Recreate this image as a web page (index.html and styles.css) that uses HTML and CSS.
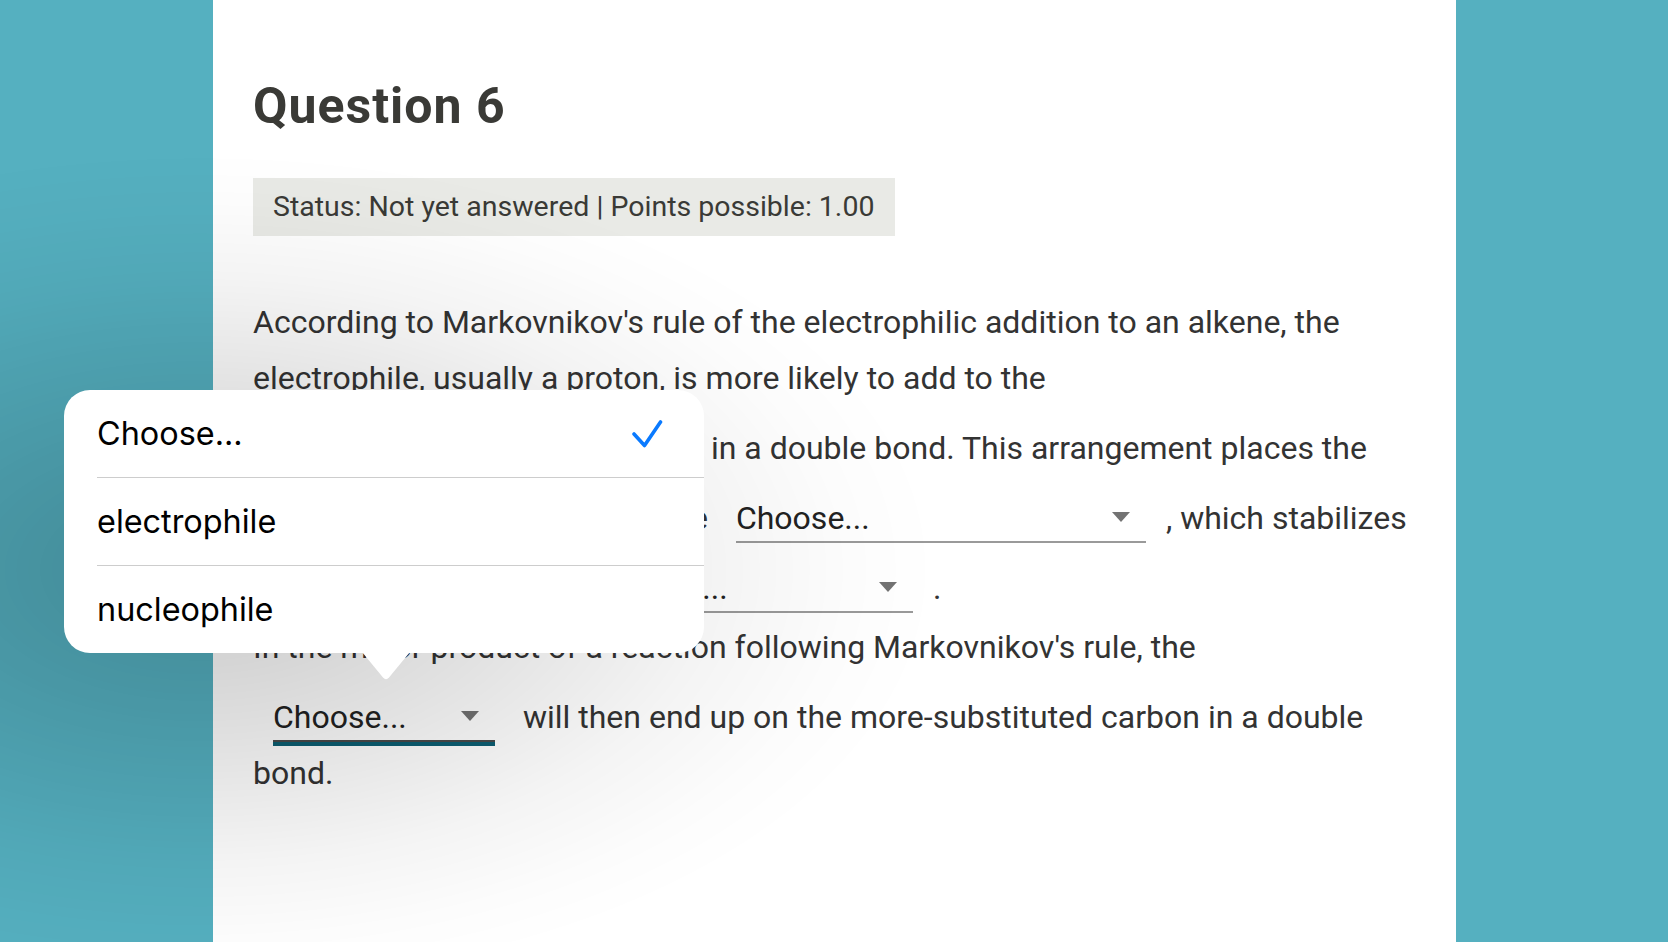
FILE: index.html
```html
<!DOCTYPE html>
<html lang="en">
<head>
  <meta charset="UTF-8" />
  <meta name="viewport" content="width=device-width, initial-scale=1.0"/>
  <title>Question 6</title>
  <link rel="stylesheet" href="styles.css">
</head>
<body>

<div class="page">
  <h1 class="q-title">Question 6</h1>
  <div class="q-status">Status: Not yet answered | Points possible: 1.00</div>

  <p class="q-text">According to Markovnikov's rule of the electrophilic addition to an alkene, the electrophile, usually a proton, is more likely to add to the <span class="pick pick-lg">Choose...</span> in a double bond. This arrangement places the emerging positive charge on the <span class="pick pick-lg">Choose...</span>, which stabilizes a carbocation through <span class="pick pick-md">Choose...</span>.<br>In the major product of a reaction following Markovnikov's rule, the <span class="pick pick-sm is-open">Choose...</span> will then end up on the more-substituted carbon in a double bond.</p>
</div>

<!-- dimmed backdrop behind the open picker -->
<div class="dim"></div>

<!-- native picker popover for the open select -->
<div class="picker">
  <div class="picker-row">
    <span>Choose...</span>
    <svg class="picker-check" width="32" height="30" viewBox="0 0 32 30">
      <path d="M3 15 L13.5 26.5 L29.5 3" fill="none" stroke="#0a7aff" stroke-width="3.6" stroke-linecap="round" stroke-linejoin="round"/>
    </svg>
  </div>
  <div class="picker-row">electrophile</div>
  <div class="picker-row">nucleophile</div>
  <svg class="picker-tail" width="48" height="29" viewBox="0 0 48 29">
    <path d="M0 0 H48 L27 25.5 Q24 29 21 25.5 Z" fill="#fff"/>
  </svg>
</div>

</body>
</html>
```

FILE: styles.css
```css
body {
  margin: 0;
  height: 942px;
  overflow: hidden;
  background: #55b0c0;
  font-family: Roboto, "Liberation Sans", sans-serif;
}

.page {
  width: 1243px;
  min-height: 942px;
  margin-left: 213px;
  padding: 40px;
  box-sizing: border-box;
  background: #fff;
}

.q-title {
  margin: 36px 0 0;
  font-size: 50px;
  line-height: 60px;
  font-weight: 700;
  letter-spacing: 1px;
  color: #3a3a36;
}

.q-status {
  width: fit-content;
  margin-top: 42px;
  padding: 12px 21px 12px 20px;
  background: #e9eae6;
  color: #3a3a36;
  font-size: 28.5px;
  line-height: 34px;
}

.q-text {
  margin: 58px 0 0;
  font-size: 32px;
  line-height: 56px;
  color: #333;
}

/* select look-alikes */
.pick {
  display: inline-block;
  position: relative;
  box-sizing: border-box;
  margin: 0 20px 3px;
  padding: 24px 0 5px;
  line-height: 36px;
  color: #222;
  border-bottom: 2px solid #9a9a9a;
}

.pick::after {
  content: "";
  position: absolute;
  right: 16px;
  bottom: 19px;
  width: 0;
  height: 0;
  border-left: 9px solid transparent;
  border-right: 9px solid transparent;
  border-top: 10px solid #737373;
}

.pick-lg { width: 410px; }
.pick-md { width: 319px; margin-bottom: 6px; }
.pick-sm { width: 222px; }

.pick.is-open {
  border-bottom-color: #4a4a4a;
  box-shadow: 0 4px 0 #0c5f73;
}

.dim {
  position: fixed;
  inset: 0;
  pointer-events: none;
  background: radial-gradient(ellipse 740px 420px at 200px 570px,
    rgba(0, 0, 0, 0.22) 0%,
    rgba(0, 0, 0, 0.12) 40%,
    rgba(0, 0, 0, 0.045) 70%,
    rgba(0, 0, 0, 0.012) 88%,
    rgba(0, 0, 0, 0) 100%);
}

/* popover */
.picker {
  position: absolute;
  left: 64px;
  top: 390px;
  width: 640px;
  background: #fff;
  border-radius: 26px;
  font-family: Inter, "Noto Sans", sans-serif;
  font-size: 32.4px;
  color: #000;
}

.picker-row {
  display: flex;
  align-items: center;
  justify-content: space-between;
  height: 88px;
  margin-left: 33px;
  padding-right: 41px;
  box-sizing: border-box;
  border-top: 1px solid #cdcdcd;
}

.picker-row:first-child {
  height: 87px;
  border-top: 0;
}

.picker-tail {
  position: absolute;
  left: 298px;
  top: 262px;
}
```
